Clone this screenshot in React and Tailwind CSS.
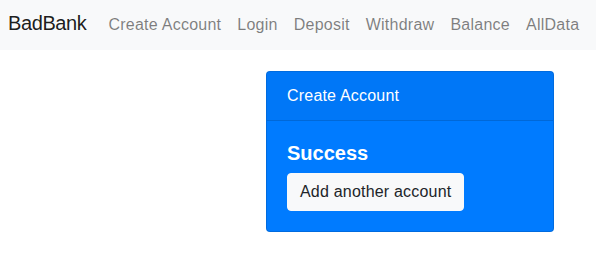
import React from "react";

const links = ["Create Account", "Login", "Deposit", "Withdraw", "Balance", "AllData"];

export default function App() {
  return (
    <div className="min-h-[260px] w-full bg-white font-['Liberation_Sans',Arial,sans-serif] text-[#212529]">
      <nav className="flex h-[50px] items-baseline bg-[#f8f9fa] pl-2 pt-2">
        <a className="mr-[14px] text-[20px] leading-[30px] tracking-[-0.4px] text-[rgba(0,0,0,0.9)]">BadBank</a>
        <ul className="flex items-baseline">
          {links.map((l) => (
            <li key={l}>
              <a className="block px-2 text-[16px] leading-6 tracking-[0.25px] text-[rgba(0,0,0,0.5)]">{l}</a>
            </li>
          ))}
        </ul>
      </nav>

      <div className="pl-[266px] pt-[21px]">
        <div className="w-[288px] overflow-hidden rounded border border-[rgba(0,0,0,0.125)] bg-[#007bff] text-white">
          <div className="border-b border-[rgba(0,0,0,0.125)] bg-[rgba(0,0,0,0.03)] px-5 py-3 text-[16px] leading-6 tracking-[0.2px]">
            Create Account
          </div>
          <div className="p-5">
            <h5 className="mb-2 text-[20px] font-bold leading-[24px]">Success</h5>
            <button className="rounded border border-[#f8f9fa] bg-[#f8f9fa] px-3 py-1.5 text-[16px] leading-6 tracking-[0.2px] text-[#212529]">
              Add another account
            </button>
          </div>
        </div>
      </div>
    </div>
  );
}
